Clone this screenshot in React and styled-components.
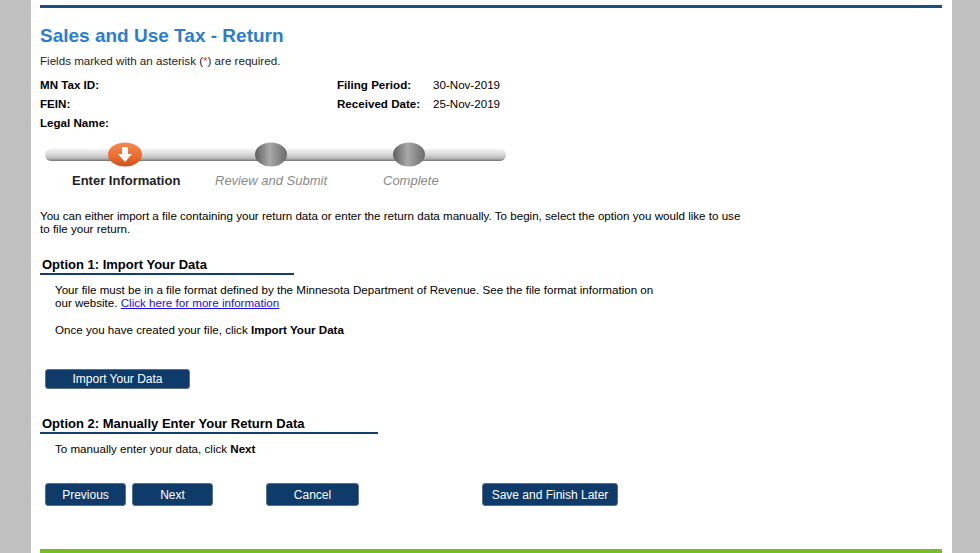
import React from "react";
import styled, { createGlobalStyle } from "styled-components";

const GlobalStyle = createGlobalStyle`
  html, body {
    margin: 0;
    padding: 0;
    background: #c0c0c0;
    font-family: "Liberation Sans", Arial, sans-serif;
  }
`;

const Page = styled.div`
  margin-left: 31px;
  width: 921px;
  height: 553px;
  background: #fff;
  padding: 5px 10px 0 9px;
  box-sizing: border-box;
  display: flex;
  flex-direction: column;
  overflow: hidden;
  color: #000;
`;

const TopRule = styled.div`
  height: 3px;
  background: #1f4e86;
`;

const Title = styled.h1`
  margin: 16px 0 0;
  font-size: 19px;
  line-height: 24px;
  font-weight: bold;
  color: #2b7dd0;
`;

const Note = styled.p`
  margin: 6px 0 0;
  font-size: 11.6px;
  line-height: 14px;
  color: #222;
`;

const Star = styled.span`
  color: #e2532c;
`;

const InfoGrid = styled.div`
  margin-top: 7px;
  display: grid;
  grid-template-columns: 297px 96px auto;
  grid-auto-rows: 19px;
  align-items: center;
  font-size: 11.6px;
`;

const InfoLabel = styled.span`
  font-weight: bold;
`;

const InfoValue = styled.span``;

const Track = styled.svg`
  display: block;
  margin: 9px 0 0 4px;
`;

const StepLabels = styled.div`
  margin-top: 5px;
  padding-left: 32px;
  display: grid;
  grid-template-columns: 143px 168px auto;
  font-size: 13px;
  line-height: 14px;
`;

const StepLabel = styled.span`
  font-weight: ${(p) => (p.$active ? "bold" : "normal")};
  font-style: ${(p) => (p.$active ? "normal" : "italic")};
  color: ${(p) => (p.$active ? "#222" : "#8a8a8a")};
`;

const Intro = styled.p`
  margin: 21px 0 0;
  width: 712px;
  font-size: 11.6px;
  line-height: 13px;
`;

const SectionHead = styled.h2`
  margin: ${(p) => p.$top}px 0 0;
  width: ${(p) => p.$width}px;
  padding: 0 0 1px 2px;
  box-sizing: border-box;
  border-bottom: 2px solid #123f6e;
  font-size: 13px;
  line-height: 14px;
  font-weight: bold;
`;

const Body = styled.p`
  margin: ${(p) => p.$top}px 0 0 15px;
  width: 606px;
  font-size: 11.6px;
  line-height: 13px;
`;

const Link = styled.a`
  color: #1a0dee;
  text-decoration: underline;
`;

const ButtonRow = styled.div`
  display: flex;
  margin: ${(p) => p.$top}px 0 0 5px;
`;

const Button = styled.button`
  width: ${(p) => p.$width}px;
  height: ${(p) => p.$height || 23}px;
  margin-left: ${(p) => p.$gap || 0}px;
  padding: 0;
  background: #0e3b69;
  color: #fff;
  border: 1px solid #5b6f86;
  border-radius: 3px;
  font-family: "Liberation Sans", Arial, sans-serif;
  font-size: 12px;
  line-height: 1;
  cursor: pointer;
`;

const Spacer = styled.div`
  flex: 1;
`;

const BottomRule = styled.div`
  height: 4px;
  background: #77bd2a;
`;

const ProgressGraphic = () => (
  <Track width="464" height="28" viewBox="0 0 464 28">
    <defs>
      <linearGradient id="trk" x1="0" y1="0" x2="0" y2="1">
        <stop offset="0" stopColor="#f2f2f2" />
        <stop offset="0.5" stopColor="#d6d6d6" />
        <stop offset="0.8" stopColor="#b4b4b4" />
        <stop offset="1" stopColor="#6f6f6f" />
      </linearGradient>
      <linearGradient id="org" x1="0" y1="0" x2="0" y2="1">
        <stop offset="0" stopColor="#f58a52" />
        <stop offset="0.6" stopColor="#ec6a2c" />
        <stop offset="1" stopColor="#c9501b" />
      </linearGradient>
      <linearGradient id="gry" x1="0" y1="0" x2="1" y2="0">
        <stop offset="0" stopColor="#5e5e5e" />
        <stop offset="0.45" stopColor="#a9a9a9" />
        <stop offset="1" stopColor="#6b6b6b" />
      </linearGradient>
    </defs>
    <rect x="1" y="8" width="461" height="12" rx="6" fill="url(#trk)" />
    <ellipse cx="81" cy="13.5" rx="17" ry="12" fill="url(#org)" />
    <path d="M78 6 h6 v7 h4 l-7 8 l-7 -8 h4 z" fill="#fff" />
    <ellipse cx="227" cy="13.5" rx="16" ry="12" fill="url(#gry)" />
    <ellipse cx="365" cy="13.5" rx="16" ry="12" fill="url(#gry)" />
  </Track>
);

export default function App() {
  return (
    <>
      <GlobalStyle />
      <Page>
        <TopRule />
        <Title>Sales and Use Tax - Return</Title>
        <Note>
          Fields marked with an asterisk (<Star>*</Star>) are required.
        </Note>
        <InfoGrid>
          <InfoLabel>MN Tax ID:</InfoLabel>
          <InfoLabel>Filing Period:</InfoLabel>
          <InfoValue>30-Nov-2019</InfoValue>
          <InfoLabel>FEIN:</InfoLabel>
          <InfoLabel>Received Date:</InfoLabel>
          <InfoValue>25-Nov-2019</InfoValue>
          <InfoLabel>Legal Name:</InfoLabel>
        </InfoGrid>
        <ProgressGraphic />
        <StepLabels>
          <StepLabel $active>Enter Information</StepLabel>
          <StepLabel>Review and Submit</StepLabel>
          <StepLabel>Complete</StepLabel>
        </StepLabels>
        <Intro>
          You can either import a file containing your return data or enter the return data
          manually. To begin, select the option you would like to use to file your return.
        </Intro>

        <SectionHead $top={23} $width={254}>Option 1: Import Your Data</SectionHead>
        <Body $top={8}>
          Your file must be in a file format defined by the Minnesota Department of Revenue.
          See the file format information on our website.{" "}
          <Link href="#">Click here for more information</Link>
        </Body>
        <Body $top={14}>
          Once you have created your file, click <b>Import Your Data</b>
        </Body>
        <ButtonRow $top={33}>
          <Button $width={145} $height={20}>Import Your Data</Button>
        </ButtonRow>

        <SectionHead $top={28} $width={338}>Option 2: Manually Enter Your Return Data</SectionHead>
        <Body $top={8}>
          To manually enter your data, click <b>Next</b>
        </Body>
        <ButtonRow $top={28}>
          <Button $width={81}>Previous</Button>
          <Button $width={81} $gap={6}>Next</Button>
          <Button $width={93} $gap={53}>Cancel</Button>
          <Button $width={136} $gap={123}>Save and Finish Later</Button>
        </ButtonRow>
        <Spacer />
        <BottomRule />
      </Page>
    </>
  );
}
